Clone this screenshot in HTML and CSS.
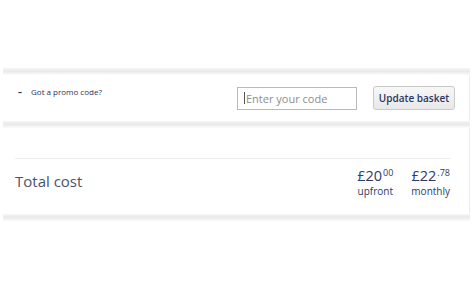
FILE: index.html
```html
<!DOCTYPE html>
<html>
<head>
<meta charset="utf-8">
<link rel="stylesheet" href="styles.css">
</head>
<body>
<div class="page">
  <div class="shade"></div>
  <section class="promo">
    <div class="promo-toggle"><span class="dash">–</span><span>Got a promo code?</span></div>
    <div class="promo-form">
      <div class="code-input"><span class="caret"></span><span class="ph">Enter your code</span></div>
      <button class="update">Update basket</button>
    </div>
  </section>
  <div class="shade"></div>
  <section class="total">
    <div class="rule"></div>
    <div class="total-row">
      <div class="total-label">Total cost</div>
      <div class="prices">
        <div class="price"><div class="amount"><span class="main">£20</span><span class="pence">00</span></div><div class="per">upfront</div></div>
        <div class="price"><div class="amount"><span class="main">£22</span><span class="pence">.78</span></div><div class="per">monthly</div></div>
      </div>
    </div>
  </section>
  <div class="shade"></div>
</div>
</body>
</html>
```
FILE: styles.css
```css
html, body { margin: 0; background: #fff; }
body { font-family: "Open Sans", "Liberation Sans", sans-serif; }
.page { padding: 68px 4px 0 3px; }
.shade {
  height: 7px;
  background: linear-gradient(to bottom, #f6f6f6, #e9e9e9 45%, #f4f4f4 80%, #fcfcfc);
}
.promo {
  height: 46px;
  display: flex;
  align-items: center;
  justify-content: space-between;
  padding: 0 14px 0 15px;
  border-right: 1px solid #ececec;
}
.promo-toggle {
  font-size: 8px;
  color: #26305c;
  display: flex;
  gap: 9px;
  margin-top: -14px;
}
.dash { font-weight: 700; }
.promo-form { display: flex; gap: 16px; align-items: center; }
.code-input {
  border: 1px solid #b9b9b9;
  display: flex;
  align-items: center;
  padding-left: 6px;
  box-sizing: border-box;
  width: 120px;
  height: 23px;
  gap: 1px;
}
.caret { width: 1px; height: 12px; background: #555; }
.ph { font-size: 11px; color: #8d8d8d; }
.update {
  font-family: "Open Sans", "Liberation Sans", sans-serif;
  font-size: 10px;
  font-weight: 600;
  color: #2b3563;
  background: linear-gradient(#f7f7f7, #e8e8e8);
  border: 1px solid #c9c9c9;
  border-radius: 3px;
  height: 24px;
  width: 82px;
  padding: 0;
}
.total {
  height: 86px;
  padding: 0 19px 0 12px;
  border-right: 1px solid #ececec;
  display: flex;
  flex-direction: column;
}
.rule { height: 1px; background: #ececec; margin-top: 30px; }
.total-row {
  display: flex;
  justify-content: space-between;
  align-items: center;
  margin-top: 8px;
}
.total-label { font-size: 15px; color: #4a5368; margin-top: -2px; }
.prices { display: flex; gap: 18px; }
.price { display: flex; flex-direction: column; align-items: center; color: #2d3a6b; }
.amount { display: flex; align-items: flex-start; height: 18px; }
.main { font-size: 14.5px; line-height: 18px; }
.pence { font-size: 9px; line-height: 11px; margin-left: 1px; }
.per { font-size: 10px; line-height: 12px; }
```
